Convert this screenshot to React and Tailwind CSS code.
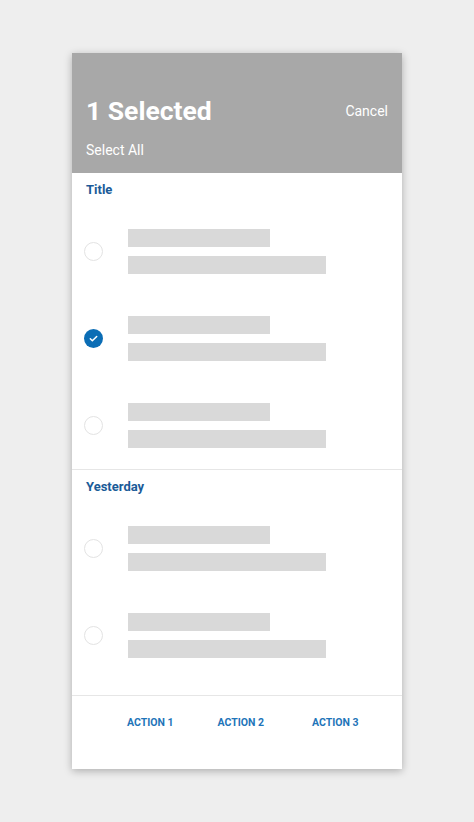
import React from 'react';

const sections = [
    { title: 'Title', rows: [false, true, false] },
    { title: 'Yesterday', rows: [false, false] },
];

function Radio({ checked }) {
    if (checked) {
        return (
            <div className="w-[19px] h-[19px] rounded-full bg-[#0b6db5] flex items-center justify-center">
                <svg width="11" height="11" viewBox="0 0 24 24" fill="none" stroke="white" strokeWidth="3.2" strokeLinecap="round" strokeLinejoin="round">
                    <path d="M5 12.5l4.5 4.5L19 7.5" />
                </svg>
            </div>
        );
    }
    return <div className="w-[19px] h-[19px] rounded-full border-[1.5px] border-[#e3e3e3]" />;
}

function Row({ checked }) {
    return (
        <div className="h-[87px] flex items-center pl-[12px]">
            <Radio checked={checked} />
            <div className="ml-[25px] flex flex-col gap-[9px]">
                <div className="w-[142px] h-[18px] bg-[#d9d9d9]" />
                <div className="w-[198px] h-[18px] bg-[#d9d9d9]" />
            </div>
        </div>
    );
}

export default function App() {
    return (
        <div className="min-h-[822px] bg-[#eeeeee] pt-[53px] flex justify-center" style={{ fontFamily: 'Roboto, "Liberation Sans", sans-serif' }}>
            <div className="w-[330px] h-[716px] bg-white shadow-[0_2px_8px_rgba(0,0,0,0.28)] flex flex-col">
                {/* Header */}
                <div className="h-[120px] bg-[#a8a8a8] px-[14px] pt-[41px] text-white">
                    <div className="flex items-center justify-between">
                        <span className="text-[26.5px] font-bold leading-[34px]">1 Selected</span>
                        <span className="text-[14px] leading-[20px]">Cancel</span>
                    </div>
                    <div className="mt-[12px] text-[14px] leading-[20px]">Select All</div>
                </div>

                {/* Sections */}
                {sections.map((s, i) => (
                    <div key={s.title} className={i > 0 ? 'border-t border-[#e6e6e6]' : ''}>
                        <div className="h-[35px] pl-[14px] pt-[8px] text-[13px] font-bold text-[#1b5b98] leading-[18px]">{s.title}</div>
                        {s.rows.map((c, j) => (
                            <Row key={j} checked={c} />
                        ))}
                    </div>
                ))}

                {/* Footer actions */}
                <div className="mt-[16px] border-t border-[#e6e6e6] flex-1 pt-[20px]">
                    <div className="flex pl-[55px] text-[10.5px] font-bold text-[#1f75b9] leading-[14px]">
                        <span>ACTION 1</span>
                        <span className="ml-[44px]">ACTION 2</span>
                        <span className="ml-[48px]">ACTION 3</span>
                    </div>
                </div>
            </div>
        </div>
    );
}
